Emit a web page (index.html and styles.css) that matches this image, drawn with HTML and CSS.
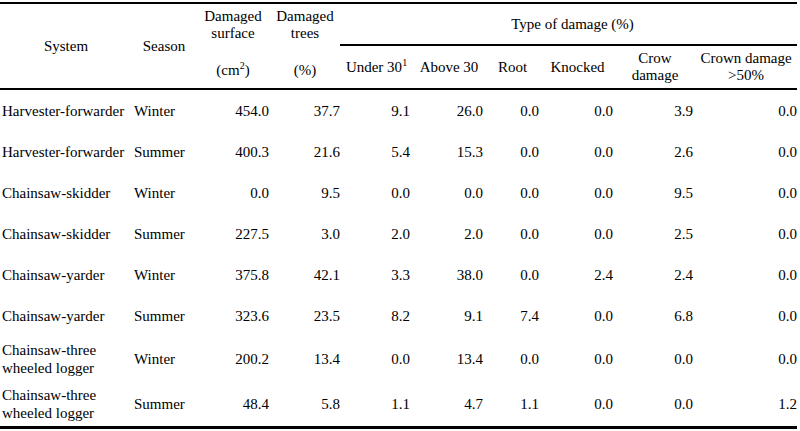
FILE: index.html
```html
<!DOCTYPE html>
<html lang="en">
<head>
<meta charset="utf-8">
<title>Type of damage</title>
<link rel="stylesheet" href="styles.css">
</head>
<body>
<div class="wrap">
<table class="dmg">
  <colgroup>
    <col class="c-system"><col class="c-season"><col class="c-surf"><col class="c-trees">
    <col class="c-u30"><col class="c-a30"><col class="c-root"><col class="c-knock">
    <col class="c-crow"><col class="c-crown">
  </colgroup>
  <thead>
    <tr class="h1">
      <th rowspan="2" class="hb">System</th>
      <th rowspan="2" class="hb">Season</th>
      <th>Damaged<br>surface</th>
      <th>Damaged<br>trees</th>
      <th colspan="6" class="group">Type of damage (%)</th>
    </tr>
    <tr class="h2">
      <th class="hb unit">(cm<sup>2</sup>)</th>
      <th class="hb unit">(%)</th>
      <th class="hb">Under 30<sup>1</sup></th>
      <th class="hb">Above 30</th>
      <th class="hb">Root</th>
      <th class="hb">Knocked</th>
      <th class="hb">Crow<br>damage</th>
      <th class="hb">Crown damage<br>&gt;50%</th>
    </tr>
  </thead>
  <tbody>
    <tr><td>Harvester-forwarder</td><td>Winter</td><td>454.0</td><td>37.7</td><td>9.1</td><td>26.0</td><td>0.0</td><td>0.0</td><td>3.9</td><td>0.0</td></tr>
    <tr><td>Harvester-forwarder</td><td>Summer</td><td>400.3</td><td>21.6</td><td>5.4</td><td>15.3</td><td>0.0</td><td>0.0</td><td>2.6</td><td>0.0</td></tr>
    <tr><td>Chainsaw-skidder</td><td>Winter</td><td>0.0</td><td>9.5</td><td>0.0</td><td>0.0</td><td>0.0</td><td>0.0</td><td>9.5</td><td>0.0</td></tr>
    <tr><td>Chainsaw-skidder</td><td>Summer</td><td>227.5</td><td>3.0</td><td>2.0</td><td>2.0</td><td>0.0</td><td>0.0</td><td>2.5</td><td>0.0</td></tr>
    <tr><td>Chainsaw-yarder</td><td>Winter</td><td>375.8</td><td>42.1</td><td>3.3</td><td>38.0</td><td>0.0</td><td>2.4</td><td>2.4</td><td>0.0</td></tr>
    <tr><td>Chainsaw-yarder</td><td>Summer</td><td>323.6</td><td>23.5</td><td>8.2</td><td>9.1</td><td>7.4</td><td>0.0</td><td>6.8</td><td>0.0</td></tr>
    <tr class="tall"><td>Chainsaw-three<br>wheeled logger</td><td>Winter</td><td>200.2</td><td>13.4</td><td>0.0</td><td>13.4</td><td>0.0</td><td>0.0</td><td>0.0</td><td>0.0</td></tr>
    <tr class="tall"><td>Chainsaw-three<br>wheeled logger</td><td>Summer</td><td>48.4</td><td>5.8</td><td>1.1</td><td>4.7</td><td>1.1</td><td>0.0</td><td>0.0</td><td>1.2</td></tr>
  </tbody>
</table>
</div>
</body>
</html>
```
FILE: styles.css
```css
html, body {
  margin: 0;
  padding: 0;
  background: #ffffff;
  font-family: "Liberation Serif", "Times New Roman", serif;
}

.wrap {
  padding-top: 2px;
}

.dmg {
  width: 797px;
  table-layout: fixed;
  border-collapse: separate;
  border-spacing: 0;
  border-top: 2px solid #000;
  border-bottom: 3px solid #000;
  font-family: "Liberation Serif", "Times New Roman", serif;
  font-size: 15px;
  line-height: 18px;
  color: #000;
}

.c-system { width: 132px; }
.c-season { width: 64px; }
.c-surf { width: 74px; }
.c-trees { width: 70px; }
.c-u30 { width: 73px; }
.c-a30 { width: 72px; }
.c-root { width: 55px; }
.c-knock { width: 75px; }
.c-crow { width: 80px; }
.c-crown { width: 102px; }

.dmg th {
  font-family: inherit;
  font-weight: normal;
  text-align: center;
  vertical-align: middle;
  padding: 0;
  line-height: 17px;
}

.dmg .h1 { height: 42px; }
.dmg .h2 { height: 44px; }

.dmg .group {
  border-bottom: 2px solid #000;
  padding-left: 8px;
}

.dmg .hb {
  border-bottom: 2px solid #000;
}

.dmg .unit {
  padding-top: 6px;
}

.dmg sup {
  font-size: 10px;
  line-height: 0;
  vertical-align: 6px;
}

.dmg td {
  font-family: inherit;
  padding: 0 1px 0 0;
  text-align: right;
  vertical-align: middle;
  white-space: nowrap;
}

.dmg tbody tr { height: 41px; }
.dmg tbody tr.tall { height: 45px; }

.dmg td:nth-child(1),
.dmg td:nth-child(2) {
  text-align: left;
  padding: 0 0 0 2px;
}

.dmg td:nth-child(4) { padding-right: 0; }
.dmg td:nth-child(5) { padding-right: 3px; }
.dmg td:nth-child(6) { padding-right: 2px; }
.dmg td:nth-child(8) { padding-right: 2px; }
.dmg td:nth-child(9) { padding-right: 2px; }
.dmg td:nth-child(10) { padding-right: 0; }
```
